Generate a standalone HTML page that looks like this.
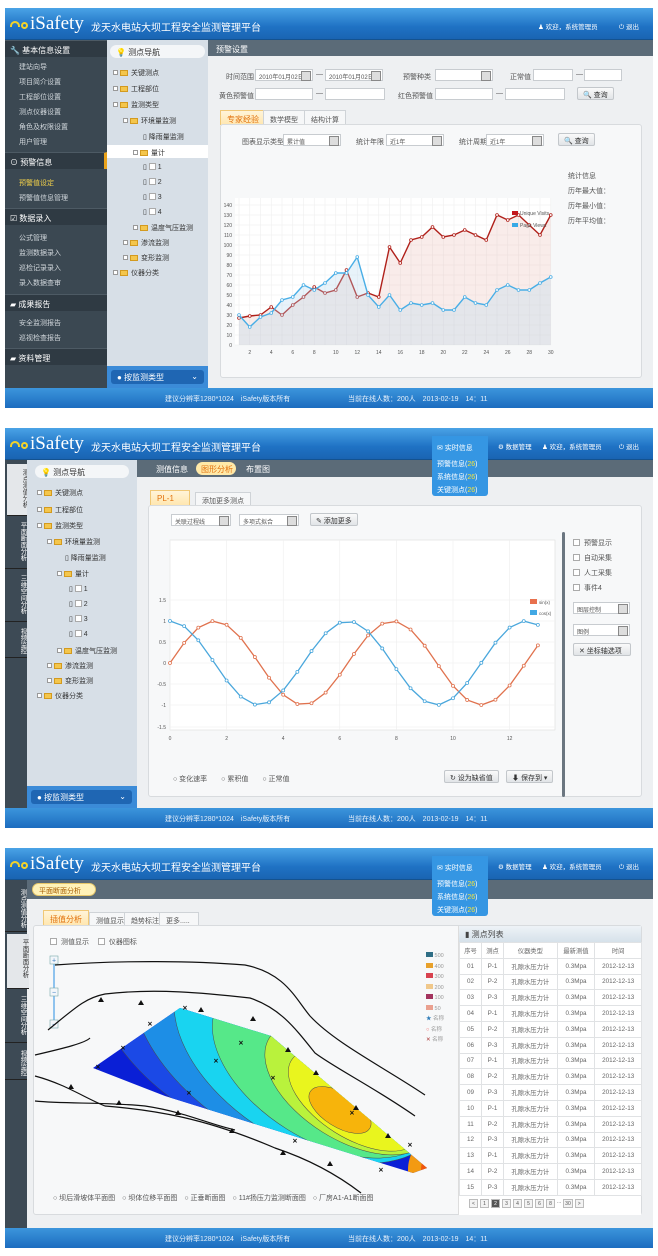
<!DOCTYPE html>
<html><head><meta charset="utf-8">
<style>
*{margin:0;padding:0;box-sizing:border-box}
body{width:658px;height:1256px;background:#fff;font-family:"Liberation Sans","Noto Sans CJK SC",sans-serif;font-size:7px;color:#555;position:relative;overflow:hidden}
.p{position:absolute;left:5px;width:648px;height:400px;background:#eef0f2;overflow:hidden}
.a{position:absolute;white-space:nowrap}
.hd{position:absolute;left:0;top:0;width:648px;height:32px;background:linear-gradient(#4aa3e6,#1f72c4 60%,#1a64b2);border-bottom:1px solid #14528f}
.logo{position:absolute;left:5px;top:5px;font-family:"Liberation Serif",serif;font-size:19px;color:#fff}
.logo b{display:inline-block;width:10px;height:6px;border:2px solid #f3d32a;border-bottom:none;border-radius:8px 8px 0 0;margin-right:1px;position:relative;top:-2px}
.logo i{display:inline-block;width:7px;height:7px;border:2px solid #f3d32a;border-radius:50%;margin-right:2px;position:relative;top:0px}
.ttl{position:absolute;left:86px;top:11px;font-size:10px;color:#fff}
.hr{position:absolute;top:13px;font-size:6.5px;color:#fff}
.ft{position:absolute;left:0;top:380px;width:648px;height:20px;background:linear-gradient(#3c95dc,#1c6cbf);color:#e8f2fb;font-size:7px}
.ft span{position:absolute;top:6px}
.nav{background:#3b4852;color:#c8d0d6}
.nh{position:absolute;left:0;width:102px;height:17px;background:#2f3a43;color:#fff;font-size:8px;padding:4px 0 0 5px;border-top:1px solid #4d5a64}
.ni{position:absolute;left:14px;font-size:7px;color:#d0d6db}
.tree{background:#d7dfe7}
.ti{position:absolute;font-size:7px;color:#333}
.fd{display:inline-block;width:8px;height:6px;background:#f4c64c;border:1px solid #d39a1f;margin-right:3px;vertical-align:-1px}
.pm{display:inline-block;width:5px;height:5px;border:1px solid #999;margin-right:2px;background:#fff}
.cb{display:inline-block;width:7px;height:7px;border:1px solid #aaa;background:#fff;vertical-align:-1px;margin-right:2px}
.inp{position:absolute;height:12px;border:1px solid #c8ccd0;background:#fff;font-size:6px;padding:2px 3px;color:#555}
.sel::after{content:"";position:absolute;right:1px;top:1px;width:8px;height:8px;background:#ddd;border:1px solid #888}
.btn{position:absolute;height:13px;border:1px solid #c3c7cb;background:linear-gradient(#fafafa,#e1e4e7);border-radius:2px;font-size:7px;padding:2px 5px;color:#333}
.tab{position:absolute;height:15px;border:1px solid #cfd3d7;border-bottom:none;background:#f6f7f8;font-size:7px;padding:4px 6px;color:#555}
.tab.on{background:linear-gradient(#fff4d9,#ffe7b0);color:#e2720f;font-size:8px;padding:3px 6px;border-color:#f0c877}
.box{position:absolute;background:#f7f8f9;border:1px solid #d8dbde;border-radius:3px}
.vt{position:absolute;left:0;width:22px;background:#3d4a55;color:#fff;font-size:6.5px;writing-mode:vertical-rl;padding:5px 0 0 6px;border-bottom:1px solid #222;overflow:hidden}
.vt.on{background:#e4e7ea;color:#333;left:2px}
.dd{position:absolute;left:427px;top:8px;width:56px;height:60px;background:#3596e3;border-radius:0 0 3px 3px;z-index:5}
.dd div{position:absolute;left:5px;font-size:7px;color:#fff}
.dd b{color:#f5e23a;font-weight:normal}
table{border-collapse:collapse;font-size:6.3px;color:#666}
td{border:1px solid #e0e2e4;height:15.8px;text-align:center;padding:0 2px}
.pg{display:inline-block;min-width:9px;height:9px;border:1px solid #bbb;background:#f3f3f3;text-align:center;line-height:8px;padding:0 1px}
</style></head><body>

<!-- ================= PANEL 1 ================= -->
<div class="p" style="top:8px">
 <div class="hd"><div class="logo"><b></b><i></i>iSafety</div><div class="ttl">龙天水电站大坝工程安全监测管理平台</div>
 <div class="hr" style="left:533px">♟ 欢迎，系统管理员</div><div class="hr" style="left:614px">⏻ 退出</div></div>
 <div class="a nav" style="left:0;top:32px;width:102px;height:348px">
  <div class="nh" style="top:0">🔧 基本信息设置</div>
  <div class="ni" style="top:22px">建站向导</div><div class="ni" style="top:37px">项目简介设置</div><div class="ni" style="top:52px">工程部位设置</div><div class="ni" style="top:67px">测点仪器设置</div><div class="ni" style="top:82px">角色及权限设置</div><div class="ni" style="top:97px">用户管理</div>
  <div class="nh" style="top:112px;border-right:3px solid #e9a21a">⊙ 预警信息</div>
  <div class="ni" style="top:138px;color:#f2d04a">预警值设定</div><div class="ni" style="top:153px">预警值信息管理</div>
  <div class="nh" style="top:168px">☑ 数据录入</div>
  <div class="ni" style="top:193px">公式管理</div><div class="ni" style="top:208px">监测数据录入</div><div class="ni" style="top:223px">巡检记录录入</div><div class="ni" style="top:238px">录入数据查审</div>
  <div class="nh" style="top:254px">▰ 成果报告</div>
  <div class="ni" style="top:278px">安全监测报告</div><div class="ni" style="top:293px">巡视检查报告</div>
  <div class="nh" style="top:308px">▰ 资料管理</div>
 </div>
 <div class="a tree" style="left:102px;top:32px;width:101px;height:348px">
  <div class="a" style="left:3px;top:5px;width:95px;height:13px;background:#f4f6f8;border-radius:7px;font-size:8px;color:#333;padding:2px 6px">💡 测点导航</div>
  <div class="ti" style="left:6px;top:28px"><span class="pm"></span><span class="fd"></span>关键测点</div>
  <div class="ti" style="left:6px;top:44px"><span class="pm"></span><span class="fd"></span>工程部位</div>
  <div class="ti" style="left:6px;top:60px"><span class="pm"></span><span class="fd"></span>监测类型</div>
  <div class="ti" style="left:16px;top:76px"><span class="pm"></span><span class="fd"></span>环境量监测</div>
  <div class="ti" style="left:36px;top:92px">▯ 降雨量监测</div>
  <div class="a" style="left:0;top:105px;width:101px;height:13px;background:#fff"></div>
  <div class="ti" style="left:26px;top:108px"><span class="pm"></span><span class="fd"></span>量计</div>
  <div class="ti" style="left:36px;top:123px">▯ <span class="cb"></span>1</div>
  <div class="ti" style="left:36px;top:138px">▯ <span class="cb"></span>2</div>
  <div class="ti" style="left:36px;top:153px">▯ <span class="cb"></span>3</div>
  <div class="ti" style="left:36px;top:168px">▯ <span class="cb"></span>4</div>
  <div class="ti" style="left:26px;top:183px"><span class="pm"></span><span class="fd"></span>温度气压监测</div>
  <div class="ti" style="left:16px;top:198px"><span class="pm"></span><span class="fd"></span>渗流监测</div>
  <div class="ti" style="left:16px;top:213px"><span class="pm"></span><span class="fd"></span>变形监测</div>
  <div class="ti" style="left:6px;top:228px"><span class="pm"></span><span class="fd"></span>仪器分类</div>
  <div class="a" style="left:0;top:326px;width:101px;height:22px;background:#3b8bd8"></div>
  <div class="a" style="left:4px;top:330px;width:93px;height:14px;background:#1f66b3;border-radius:3px;color:#fff;font-size:8px;padding:2px 6px">● 按监测类型<span style="position:absolute;right:6px">⌄</span></div>
 </div>
 <div class="a" style="left:203px;top:32px;width:445px;height:16px;background:#5b6b78;color:#fff;font-size:8px;padding:4px 8px">预警设置</div>
 <div class="a" style="left:221px;top:64px">时间范围</div>
 <div class="inp sel" style="left:250px;top:61px;width:58px">2010年01月02日</div><div class="a" style="left:311px;top:63px">—</div>
 <div class="inp sel" style="left:320px;top:61px;width:58px">2010年01月02日</div>
 <div class="a" style="left:398px;top:64px">预警种类</div><div class="inp sel" style="left:430px;top:61px;width:58px"></div>
 <div class="a" style="left:505px;top:64px">正常值</div><div class="inp" style="left:528px;top:61px;width:40px"></div><div class="a" style="left:571px;top:63px">—</div><div class="inp" style="left:579px;top:61px;width:38px"></div>
 <div class="a" style="left:214px;top:83px">黄色预警值</div><div class="inp" style="left:250px;top:80px;width:58px"></div><div class="a" style="left:311px;top:82px">—</div><div class="inp" style="left:320px;top:80px;width:60px"></div>
 <div class="a" style="left:393px;top:83px">红色预警值</div><div class="inp" style="left:430px;top:80px;width:58px"></div><div class="a" style="left:491px;top:82px">—</div><div class="inp" style="left:500px;top:80px;width:60px"></div>
 <div class="btn" style="left:572px;top:79px">🔍 查询</div>
 <div class="tab on" style="left:215px;top:102px">专家经验</div><div class="tab" style="left:258px;top:102px">数学模型</div><div class="tab" style="left:299px;top:102px">结构计算</div>
 <div class="box" style="left:215px;top:116px;width:422px;height:254px"></div>
 <div class="a" style="left:237px;top:129px">图表显示类型</div><div class="inp sel" style="left:278px;top:126px;width:58px">累计值</div>
 <div class="a" style="left:351px;top:129px">统计年限</div><div class="inp sel" style="left:381px;top:126px;width:58px">近1年</div>
 <div class="a" style="left:454px;top:129px">统计周期</div><div class="inp sel" style="left:481px;top:126px;width:58px">近1年</div>
 <div class="btn" style="left:553px;top:125px">🔍 查询</div>
 <div class="a" style="left:563px;top:163px">统计信息</div><div class="a" style="left:563px;top:178px">历年最大值：</div><div class="a" style="left:563px;top:193px">历年最小值：</div><div class="a" style="left:563px;top:208px">历年平均值：</div>
 <svg class="a" style="left:0;top:0" width="648" height="400" id="c1"></svg>
 <div class="ft"><span style="left:160px">建议分辨率1280*1024　iSafety版本所有</span><span style="left:343px">当前在线人数：200人　2013-02-19　14：11</span></div>
</div>

<!-- ================= PANEL 2 ================= -->
<div class="p" style="top:428px">
 <div class="hd"><div class="logo"><b></b><i></i>iSafety</div><div class="ttl">龙天水电站大坝工程安全监测管理平台</div>
 <div class="hr" style="left:493px">⚙ 数据管理</div><div class="hr" style="left:537px">♟ 欢迎，系统管理员</div><div class="hr" style="left:614px">⏻ 退出</div></div>
 <div class="dd"><div style="top:7px">✉ 实时信息</div><div style="top:23px">预警信息(<b>26</b>)</div><div style="top:36px">系统信息(<b>26</b>)</div><div style="top:49px">关键测点(<b>26</b>)</div></div>
 <div class="a" style="left:0;top:32px;width:22px;height:348px;background:#3d4a55"></div>
 <div class="vt on" style="top:36px;height:52px">测点测值分析</div>
 <div class="vt" style="top:89px;height:52px">平面断面分析</div>
 <div class="vt" style="top:142px;height:52px">三维空间分析</div>
 <div class="vt" style="top:195px;height:35px">视频监控</div>
 <div class="a tree" style="left:22px;top:32px;width:110px;height:348px">
  <div class="a" style="left:8px;top:5px;width:94px;height:13px;background:#f4f6f8;border-radius:7px;font-size:8px;color:#333;padding:2px 6px">💡 测点导航</div>
  <div class="ti" style="left:10px;top:28px"><span class="pm"></span><span class="fd"></span>关键测点</div>
  <div class="ti" style="left:10px;top:45px"><span class="pm"></span><span class="fd"></span>工程部位</div>
  <div class="ti" style="left:10px;top:61px"><span class="pm"></span><span class="fd"></span>监测类型</div>
  <div class="ti" style="left:20px;top:77px"><span class="pm"></span><span class="fd"></span>环境量监测</div>
  <div class="ti" style="left:38px;top:93px">▯ 降雨量监测</div>
  <div class="ti" style="left:30px;top:109px"><span class="pm"></span><span class="fd"></span>量计</div>
  <div class="ti" style="left:42px;top:125px">▯ <span class="cb"></span>1</div>
  <div class="ti" style="left:42px;top:140px">▯ <span class="cb"></span>2</div>
  <div class="ti" style="left:42px;top:155px">▯ <span class="cb"></span>3</div>
  <div class="ti" style="left:42px;top:170px">▯ <span class="cb"></span>4</div>
  <div class="ti" style="left:30px;top:186px"><span class="pm"></span><span class="fd"></span>温度气压监测</div>
  <div class="ti" style="left:20px;top:201px"><span class="pm"></span><span class="fd"></span>渗流监测</div>
  <div class="ti" style="left:20px;top:216px"><span class="pm"></span><span class="fd"></span>变形监测</div>
  <div class="ti" style="left:10px;top:231px"><span class="pm"></span><span class="fd"></span>仪器分类</div>
  <div class="a" style="left:0;top:326px;width:110px;height:22px;background:#3b8bd8"></div>
  <div class="a" style="left:4px;top:330px;width:101px;height:14px;background:#1f66b3;border-radius:3px;color:#fff;font-size:8px;padding:2px 6px">● 按监测类型<span style="position:absolute;right:6px">⌄</span></div>
 </div>
 <div class="a" style="left:132px;top:32px;width:516px;height:17px;background:#5b6b78"></div>
 <div class="a" style="left:151px;top:36px;color:#fff;font-size:8px">测值信息</div>
 <div class="a" style="left:191px;top:34px;width:40px;height:13px;background:#ffe9a8;border-radius:7px;color:#e2720f;font-size:8px;padding:2px 5px">图形分析</div>
 <div class="a" style="left:241px;top:36px;color:#fff;font-size:8px">布置图</div>
 <div class="tab on" style="left:145px;top:62px;width:40px">PL-1</div><div class="tab" style="left:190px;top:64px;height:13px;padding:3px 6px">添加更多测点</div>
 <div class="box" style="left:143px;top:77px;width:494px;height:292px"></div>
 <div class="inp sel" style="left:166px;top:86px;width:60px">关联过程线</div>
 <div class="inp sel" style="left:234px;top:86px;width:60px">多项式拟合</div>
 <div class="btn" style="left:305px;top:85px">✎ 添加更多</div>
 <div class="a" style="left:557px;top:104px;width:3px;height:265px;background:#6b7680;border-radius:2px"></div>
 <div class="a" style="left:568px;top:110px"><span class="cb"></span> 预警显示</div>
 <div class="a" style="left:568px;top:125px"><span class="cb"></span> 自动采集</div>
 <div class="a" style="left:568px;top:140px"><span class="cb"></span> 人工采集</div>
 <div class="a" style="left:568px;top:155px"><span class="cb"></span> 事件4</div>
 <div class="inp sel" style="left:568px;top:174px;width:57px">图层控制</div>
 <div class="inp sel" style="left:568px;top:196px;width:57px">图例</div>
 <div class="btn" style="left:568px;top:215px;width:58px">✕ 坐标轴选项</div>
 <div class="a" style="left:168px;top:346px">○ 变化速率　　○ 累积值　　○ 正常值</div>
 <div class="btn" style="left:439px;top:342px">↻ 设为缺省值</div>
 <div class="btn" style="left:501px;top:342px">⬇ 保存到 ▾</div>
 <svg class="a" style="left:0;top:0" width="648" height="400" id="c2"></svg>
 <div class="ft"><span style="left:160px">建议分辨率1280*1024　iSafety版本所有</span><span style="left:343px">当前在线人数：200人　2013-02-19　14：11</span></div>
</div>

<!-- ================= PANEL 3 ================= -->
<div class="p" style="top:848px">
 <div class="hd"><div class="logo"><b></b><i></i>iSafety</div><div class="ttl">龙天水电站大坝工程安全监测管理平台</div>
 <div class="hr" style="left:493px">⚙ 数据管理</div><div class="hr" style="left:537px">♟ 欢迎，系统管理员</div><div class="hr" style="left:614px">⏻ 退出</div></div>
 <div class="a" style="left:22px;top:32px;width:626px;height:19px;background:#5b6b78"></div>
 <div class="dd"><div style="top:7px">✉ 实时信息</div><div style="top:23px">预警信息(<b>26</b>)</div><div style="top:36px">系统信息(<b>26</b>)</div><div style="top:49px">关键测点(<b>26</b>)</div></div>
 <div class="a" style="left:0;top:32px;width:22px;height:348px;background:#3d4a55"></div>
 <div class="vt" style="top:36px;height:48px">测点测值分析</div>
 <div class="vt on" style="top:86px;height:55px">平面断面分析</div>
 <div class="vt" style="top:143px;height:52px">三维空间分析</div>
 <div class="vt" style="top:197px;height:35px">视频监控</div>
 <div class="a" style="left:27px;top:35px;width:64px;height:13px;background:#fff2b8;border:1px solid #e6c76a;border-radius:7px;color:#a55b00;font-size:7px;padding:2px 6px">平面断面分析</div>
 <div class="tab on" style="left:38px;top:62px">插值分析</div><div class="tab" style="left:84px;top:64px;height:13px;padding:3px 6px">测值显示</div><div class="tab" style="left:119px;top:64px;height:13px;padding:3px 6px">趋势标注</div><div class="tab" style="left:154px;top:64px;height:13px;padding:3px 6px;width:40px">更多.....</div>
 <div class="box" style="left:28px;top:77px;width:609px;height:290px"></div>
 <div class="a" style="left:45px;top:89px"><span class="cb"></span> 测值显示　 <span class="cb"></span> 仪器图标</div>
 <div class="a" style="left:48px;top:345px">○ 坝后滑坡体平面图　○ 坝体位移平面图　○ 正垂断面图　○ 11#扬压力监测断面图　○ 厂房A1-A1断面图</div>
 <div class="a" style="left:421px;top:103px;font-size:5.5px;line-height:10.5px;color:#999">
  <div><span style="display:inline-block;width:7px;height:5px;background:#2f6e86"></span> 500</div>
  <div><span style="display:inline-block;width:7px;height:5px;background:#e8a12b"></span> 400</div>
  <div><span style="display:inline-block;width:7px;height:5px;background:#d8424f"></span> 300</div>
  <div><span style="display:inline-block;width:7px;height:5px;background:#f0c88b"></span> 200</div>
  <div><span style="display:inline-block;width:7px;height:5px;background:#a3345e"></span> 100</div>
  <div><span style="display:inline-block;width:7px;height:5px;background:#eaa08f"></span> 50</div>
  <div><span style="color:#2a79b7">★</span> 名称</div><div><span style="color:#e66">○</span> 名称</div><div><span style="color:#a33">✕</span> 名称</div>
 </div>
 <div class="a" style="left:453px;top:78px;width:183px;height:289px;background:#fff;border-left:1px solid #ddd">
  <div style="height:16px;background:linear-gradient(#eef3f7,#d6e1ea);font-size:8px;color:#444;padding:3px 6px">▮ 测点列表</div>
  <table style="width:183px">
   <tr><td>序号</td><td>测点</td><td>仪器类型</td><td>最新测值</td><td>时间</td></tr>
   <tr><td>01</td><td>P-1</td><td>孔隙水压力计</td><td>0.3Mpa</td><td>2012-12-13</td></tr>
   <tr><td>02</td><td>P-2</td><td>孔隙水压力计</td><td>0.3Mpa</td><td>2012-12-13</td></tr>
   <tr><td>03</td><td>P-3</td><td>孔隙水压力计</td><td>0.3Mpa</td><td>2012-12-13</td></tr>
   <tr><td>04</td><td>P-1</td><td>孔隙水压力计</td><td>0.3Mpa</td><td>2012-12-13</td></tr>
   <tr><td>05</td><td>P-2</td><td>孔隙水压力计</td><td>0.3Mpa</td><td>2012-12-13</td></tr>
   <tr><td>06</td><td>P-3</td><td>孔隙水压力计</td><td>0.3Mpa</td><td>2012-12-13</td></tr>
   <tr><td>07</td><td>P-1</td><td>孔隙水压力计</td><td>0.3Mpa</td><td>2012-12-13</td></tr>
   <tr><td>08</td><td>P-2</td><td>孔隙水压力计</td><td>0.3Mpa</td><td>2012-12-13</td></tr>
   <tr><td>09</td><td>P-3</td><td>孔隙水压力计</td><td>0.3Mpa</td><td>2012-12-13</td></tr>
   <tr><td>10</td><td>P-1</td><td>孔隙水压力计</td><td>0.3Mpa</td><td>2012-12-13</td></tr>
   <tr><td>11</td><td>P-2</td><td>孔隙水压力计</td><td>0.3Mpa</td><td>2012-12-13</td></tr>
   <tr><td>12</td><td>P-3</td><td>孔隙水压力计</td><td>0.3Mpa</td><td>2012-12-13</td></tr>
   <tr><td>13</td><td>P-1</td><td>孔隙水压力计</td><td>0.3Mpa</td><td>2012-12-13</td></tr>
   <tr><td>14</td><td>P-2</td><td>孔隙水压力计</td><td>0.3Mpa</td><td>2012-12-13</td></tr>
   <tr><td>15</td><td>P-3</td><td>孔隙水压力计</td><td>0.3Mpa</td><td>2012-12-13</td></tr>
  </table>
  <div style="position:absolute;left:10px;top:273px;font-size:5px;color:#555;display:flex;gap:2px">
   <span class="pg">&lt;</span><span class="pg">1</span><span class="pg" style="background:#555;color:#fff">2</span><span class="pg">3</span><span class="pg">4</span><span class="pg">5</span><span class="pg">6</span><span class="pg">8</span><span>...</span><span class="pg">30</span><span class="pg">&gt;</span>
  </div>
 </div>
 <svg class="a" style="left:0;top:0" width="648" height="400" id="c3"></svg>
 <div class="ft"><span style="left:160px">建议分辨率1280*1024　iSafety版本所有</span><span style="left:343px">当前在线人数：200人　2013-02-19　14：11</span></div>
</div>

<script>
function E(svg,tag,attrs,txt){var e=document.createElementNS("http://www.w3.org/2000/svg",tag);for(var k in attrs)e.setAttribute(k,attrs[k]);if(txt!=null)e.textContent=txt;svg.appendChild(e);return e;}
(function(){var s=document.getElementById("c1");var x0=230,x1=546,y0=337,yt=196;
E(s,"rect",{x:x0,y:yt-6,width:x1-x0,height:y0-yt+6,fill:"#fff"});
for(var v=0;v<=140;v+=10){var y=y0-v;E(s,"line",{x1:x0,x2:x1,y1:y,y2:y,stroke:"#eee","stroke-width":.6});E(s,"text",{x:x0-3,y:y+2,"font-size":5,"text-anchor":"end",fill:"#555"},v);}
for(var i=1;i<=30;i++){var x=234+(i-1)*10.75;E(s,"line",{x1:x,x2:x,y1:yt-6,y2:y0,stroke:"#eee","stroke-width":.6});if(i%2==0)E(s,"text",{x:x,y:y0+9,"font-size":5,"text-anchor":"middle",fill:"#555"},i);}
var r=[27,29,30,38,30,40,48,58,52,55,75,48,52,48,98,82,105,108,118,108,110,115,110,105,130,125,130,120,110,130];
var b=[30,18,28,32,45,48,60,55,62,72,72,88,50,38,50,35,42,40,42,35,35,48,42,40,55,60,55,55,62,68];
function pl(d,c,fill){var p=d.map(function(v,i){return (234+i*10.75)+","+(y0-v)}).join(" ");
 if(fill)E(s,"polygon",{points:"234,"+y0+" "+p+" "+(234+29*10.75)+","+y0,fill:fill});
 E(s,"polyline",{points:p,fill:"none",stroke:c,"stroke-width":1.4});
 d.forEach(function(v,i){E(s,"circle",{cx:234+i*10.75,cy:y0-v,r:1.4,fill:"#fff",stroke:c,"stroke-width":.8})});}
pl(r,"#b0201a","rgba(230,180,170,.25)");pl(b,"#49aee6","rgba(180,215,240,.3)");
E(s,"rect",{x:507,y:203,width:6,height:4,fill:"#c4161c"});E(s,"text",{x:515,y:207,"font-size":5,fill:"#555"},"Unique Visits");
E(s,"rect",{x:507,y:215,width:6,height:4,fill:"#36a9e6"});E(s,"text",{x:515,y:219,"font-size":5,fill:"#555"},"Page Views");
})();
(function(){var s=document.getElementById("c2");var x0=165,x1=550,yt=112,yb=302;
E(s,"rect",{x:x0,y:yt,width:x1-x0,height:yb-yt,fill:"#fff",stroke:"#ddd","stroke-width":.6});
var ys={1.5:172,1:193,0.5:214,0:235,"-0.5":256,"-1":277,"-1.5":299};
for(var k in ys){E(s,"line",{x1:x0,x2:x1,y1:ys[k],y2:ys[k],stroke:"#eee","stroke-width":.6});E(s,"text",{x:x0-4,y:ys[k]+2,"font-size":5,"text-anchor":"end",fill:"#555"},k);}
for(var t=0;t<=12;t+=2){var x=x0+t*28.3;E(s,"line",{x1:x,x2:x,y1:yt,y2:yb,stroke:"#eee","stroke-width":.6});E(s,"text",{x:x,y:yb+10,"font-size":5,"text-anchor":"middle",fill:"#555"},t);}
function f(fn,c){var pts=[];for(var t=0;t<=13.45;t+=0.5)pts.push([x0+t*28.3,235-42*fn(t)]);
 E(s,"polyline",{points:pts.map(function(p){return p.join(",")}).join(" "),fill:"none",stroke:c,"stroke-width":1.3});
 pts.forEach(function(p){E(s,"circle",{cx:p[0],cy:p[1],r:1.5,fill:"#fff",stroke:c,"stroke-width":.8})});}
f(Math.sin,"#e0724e");f(Math.cos,"#4aa7dc");
E(s,"rect",{x:525,y:171,width:7,height:5,fill:"#e8704d"});E(s,"text",{x:534,y:176,"font-size":4.5,fill:"#555"},"sin(x)");
E(s,"rect",{x:525,y:182,width:7,height:5,fill:"#42a8e4"});E(s,"text",{x:534,y:187,"font-size":4.5,fill:"#555"},"cos(x)");
})();
(function(){var s=document.getElementById("c3");
E(s,"line",{x1:49,x2:49,y1:112,y2:176,stroke:"#8fc3ee","stroke-width":2});
[["+",112],["−",144],["−",176]].forEach(function(a){E(s,"rect",{x:45,y:a[1]-4,width:8,height:8,fill:"#f3f6fa",stroke:"#7aa","stroke-width":.6});E(s,"text",{x:49,y:a[1]+2.5,"font-size":7,"text-anchor":"middle",fill:"#3a7cc2"},a[0]);});
var tri="88,220 175,160 266,188 422,320 408,325 160,248";
var d=E(s,"defs",{});var cp=E(d,"clipPath",{id:"cl"});E(cp,"polygon",{points:tri});
var g2=E(s,"g",{"clip-path":"url(#cl)"});
E(g2,"rect",{x:80,y:150,width:350,height:180,fill:"#0a1fd6"});
var bands=[["#1b49e6",250,150,180,130],["#1d8ee6",285,185,175,110],["#19d4f0",305,205,150,90],["#56e889",320,220,125,72],["#b9f23c",345,240,95,52],["#e9f51e",350,252,75,38],["#f7b40b",335,262,35,17]];
bands.forEach(function(b){E(g2,"ellipse",{cx:b[1],cy:b[2],rx:b[3],ry:b[4],fill:b[0],stroke:"#4a4a4a","stroke-width":.5,transform:"rotate(32 "+b[1]+" "+b[2]+")"});});
E(g2,"ellipse",{cx:425,cy:322,rx:22,ry:30,fill:"#f39a12"});E(g2,"ellipse",{cx:428,cy:322,rx:12,ry:20,fill:"#f0560e"});E(g2,"ellipse",{cx:430,cy:322,rx:5,ry:10,fill:"#e51010"});
var L=["M50,117 C120,112 190,113 240,117 C280,125 290,150 305,168 C330,195 380,220 420,247","M43,182 C70,160 80,150 100,146 C150,140 200,145 245,150 C275,160 290,180 310,205 C330,220 370,240 410,268","M30,207 C60,200 80,195 85,190","M30,228 C60,236 80,250 100,258 C150,262 200,270 270,300 C300,310 330,325 356,345","M30,253 C60,256 100,254 140,258 C180,264 200,275 230,282"];
L.forEach(function(l){E(s,"path",{d:l,fill:"none",stroke:"#111","stroke-width":1.2});});
[[96,152],[136,155],[196,162],[248,171],[283,202],[311,225],[351,260],[383,288],[66,239],[114,255],[173,265],[227,283],[278,305],[325,316]].forEach(function(p){E(s,"polygon",{points:(p[0]-3)+","+(p[1]+2)+" "+(p[0]+3)+","+(p[1]+2)+" "+p[0]+","+(p[1]-3),fill:"#111"});});
[[93,219],[118,200],[145,176],[180,160],[236,195],[211,213],[184,245],[268,230],[347,265],[290,293],[405,297],[376,322]].forEach(function(p){E(s,"text",{x:p[0],y:p[1]+2.5,"font-size":8,"text-anchor":"middle",fill:"#111","font-weight":"bold"},"×");});
})();
</script>
</body></html>
